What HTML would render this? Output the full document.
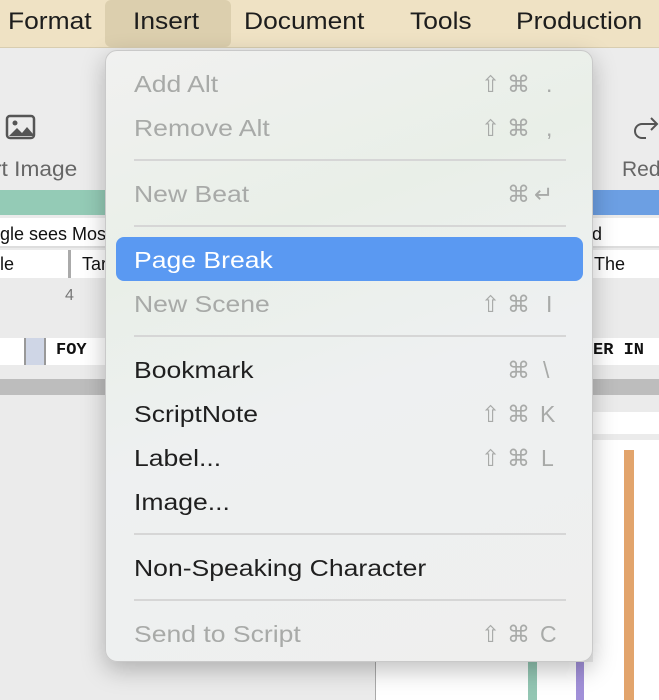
<!DOCTYPE html>
<html><head><style>
*{margin:0;padding:0;box-sizing:border-box}
body{width:659px;height:700px;overflow:hidden;position:relative;background:#ebebeb;font-family:"Liberation Sans","DejaVu Sans",sans-serif}
.a{position:absolute}
.mb{left:0;top:0;width:659px;height:48px;background:#efe2c4;border-bottom:1px solid #d8cdb0}
.mb span{position:absolute;top:8px;font-size:24px;color:#1d1d1d;transform:scaleX(1.1);transform-origin:left}
.menu{left:105px;top:50px;width:488px;height:612px;border-radius:12px;background:linear-gradient(160deg,#f1f1f0 0%,#e9efe8 30%,#eef0f1 55%,#efefee 100%);border:1px solid #c9c9c9;box-shadow:0 8px 24px rgba(0,0,0,.25)}
.it{position:absolute;left:28px;font-size:23.5px;line-height:26px;color:#1f1f1f;transform:scaleX(1.13);transform-origin:left;white-space:nowrap}
.d{color:#a8aaa8}
.k{position:absolute;font-size:23px;line-height:26px;color:#a8aaa8}
.sep{position:absolute;left:28px;width:432px;height:2px;background:#d6d6d6}
.hl{position:absolute;left:10px;top:186px;width:467px;height:44px;border-radius:8px;background:#5a99f2}
</style></head><body>
<div class="a" style="left:0;top:48px;width:659px;height:142px;background:#ececec"></div>
<svg class="a" style="left:5px;top:114px" width="32" height="26" viewBox="0 0 32 26"><rect x="2" y="2" width="27" height="22" rx="3" fill="none" stroke="#555" stroke-width="2.5"/><circle cx="10" cy="9" r="2.5" fill="#555"/><path d="M4 22 L12 14 L17 19 L22 13 L28 20 L28 22Z" fill="#555"/></svg>
<div class="a" style="left:-6px;top:158px;font-size:21px;color:#666;transform:scaleX(1.08);transform-origin:left">rt Image</div>
<svg class="a" style="left:632px;top:114px" width="27" height="28" viewBox="0 0 27 28"><path d="M25 10 H10 a7 7 0 0 0 0 14 H14 M19 4 L25 10 L19 16" fill="none" stroke="#555" stroke-width="2"/></svg>
<div class="a" style="left:622px;top:158px;font-size:21px;color:#666">Red</div>
<div class="a" style="left:0;top:190px;width:659px;height:25px;background:#94cbb6"></div>
<div class="a" style="left:590px;top:190px;width:69px;height:25px;background:#6c9fe3"></div>
<div class="a" style="left:0;top:218px;width:659px;height:30px;background:#fff;border-bottom:2px solid #ddd"></div>
<div class="a" style="left:0;top:224px;font-size:18px;color:#111">gle sees Mos</div>
<div class="a" style="left:592px;top:224px;font-size:18px;color:#111">d</div>
<div class="a" style="left:0;top:250px;width:659px;height:28px;background:#fff"></div>
<div class="a" style="left:68px;top:250px;width:3px;height:28px;background:#aaa"></div>
<div class="a" style="left:0;top:254px;font-size:18px;color:#111">le</div>
<div class="a" style="left:82px;top:254px;font-size:18px;color:#111">Tar</div>
<div class="a" style="left:594px;top:254px;font-size:18px;color:#111">The</div>
<div class="a" style="left:65px;top:287px;font-size:16px;color:#777">4</div>
<div class="a" style="left:0;top:338px;width:659px;height:27px;background:#fff"></div>
<div class="a" style="left:24px;top:338px;width:22px;height:27px;background:#cfd6e6;border-left:2px solid #999;border-right:2px solid #999"></div>
<div class="a" style="left:56px;top:341px;font:bold 17px 'Liberation Mono',monospace;color:#111">FOY</div>
<div class="a" style="left:593px;top:341px;font:bold 17px 'Liberation Mono',monospace;color:#111">ER IN</div>
<div class="a" style="left:0;top:379px;width:659px;height:16px;background:#bdbdbd"></div>
<div class="a" style="left:593px;top:412px;width:66px;height:22px;background:#fff"></div>
<div class="a" style="left:375px;top:662px;width:284px;height:38px;background:#fff;border-left:1px solid #aaa"></div>
<div class="a" style="left:593px;top:440px;width:66px;height:260px;background:#fff"></div>
<div class="a" style="left:624px;top:450px;width:10px;height:250px;background:#e2a46c"></div>
<div class="a" style="left:528px;top:662px;width:9px;height:38px;background:#93c6b3"></div>
<div class="a" style="left:576px;top:662px;width:8px;height:38px;background:#a190d8"></div>
<div class="a mb">
<div class="a" style="left:105px;top:0;width:126px;height:47px;background:#dccfae;border-radius:6px"></div>
<span style="left:8px">Format</span><span style="left:133px">Insert</span><span style="left:244px">Document</span><span style="left:410px">Tools</span><span style="left:516px">Production</span>
</div>
<div class="a menu">
<div class="hl"></div>
<div class="it d" style="top:20px">Add Alt</div><span class="k" style="left:375px;top:20px">⇧</span><span class="k" style="left:401px;top:20px">⌘</span><span class="k" style="left:440px;top:20px">.</span>
<div class="it d" style="top:64px">Remove Alt</div><span class="k" style="left:375px;top:64px">⇧</span><span class="k" style="left:401px;top:64px">⌘</span><span class="k" style="left:440px;top:64px">,</span>
<div class="sep" style="top:108px"></div>
<div class="it d" style="top:130px">New Beat</div><span class="k" style="left:401px;top:130px">⌘</span><span class="k" style="left:428px;top:130px">↵</span>
<div class="sep" style="top:174px"></div>
<div class="it" style="top:196px;color:#fff">Page Break</div>
<div class="it d" style="top:240px">New Scene</div><span class="k" style="left:375px;top:240px">⇧</span><span class="k" style="left:401px;top:240px">⌘</span><span class="k" style="left:440px;top:240px">I</span>
<div class="sep" style="top:284px"></div>
<div class="it" style="top:306px">Bookmark</div><span class="k" style="left:401px;top:306px">⌘</span><span class="k" style="left:437px;top:306px">\</span>
<div class="it" style="top:350px">ScriptNote</div><span class="k" style="left:375px;top:350px">⇧</span><span class="k" style="left:401px;top:350px">⌘</span><span class="k" style="left:434px;top:350px">K</span>
<div class="it" style="top:394px">Label...</div><span class="k" style="left:375px;top:394px">⇧</span><span class="k" style="left:401px;top:394px">⌘</span><span class="k" style="left:435px;top:394px">L</span>
<div class="it" style="top:438px">Image...</div>
<div class="sep" style="top:482px"></div>
<div class="it" style="top:504px">Non-Speaking Character</div>
<div class="sep" style="top:548px"></div>
<div class="it d" style="top:570px">Send to Script</div><span class="k" style="left:375px;top:570px">⇧</span><span class="k" style="left:401px;top:570px">⌘</span><span class="k" style="left:434px;top:570px">C</span>
</div>
</body></html>
